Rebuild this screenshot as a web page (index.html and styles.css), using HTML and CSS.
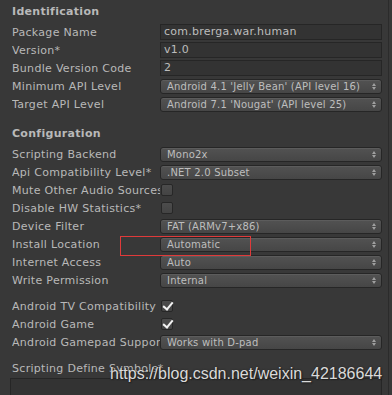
FILE: index.html
```html
<!DOCTYPE html>
<html lang="en">
<head>
  <meta charset="UTF-8" />
  <title>Player Settings</title>
  <link rel="stylesheet" href="styles.css">
</head>
<body>
  <div class="inspector">
    <div class="section-title">Identification</div>
    <div class="row"><span class="label">Package Name</span><div class="field">com.brerga.war.human</div></div>
    <div class="row"><span class="label">Version*</span><div class="field">v1.0</div></div>
    <div class="row"><span class="label">Bundle Version Code</span><div class="field">2</div></div>
    <div class="row"><span class="label">Minimum API Level</span><div class="popup">Android 4.1 'Jelly Bean' (API level 16)<span class="arrows"></span></div></div>
    <div class="row"><span class="label">Target API Level</span><div class="popup">Android 7.1 'Nougat' (API level 25)<span class="arrows"></span></div></div>

    <div class="section-title config">Configuration</div>
    <div class="row"><span class="label">Scripting Backend</span><div class="popup">Mono2x<span class="arrows"></span></div></div>
    <div class="row"><span class="label">Api Compatibility Level*</span><div class="popup">.NET 2.0 Subset<span class="arrows"></span></div></div>
    <div class="row"><span class="label">Mute Other Audio Sources</span><div class="check"></div></div>
    <div class="row"><span class="label">Disable HW Statistics*</span><div class="check"></div></div>
    <div class="row"><span class="label">Device Filter</span><div class="popup">FAT (ARMv7+x86)<span class="arrows"></span></div></div>
    <div class="row"><span class="label">Install Location</span><div class="popup">Automatic<span class="arrows"></span></div></div>
    <div class="row"><span class="label">Internet Access</span><div class="popup">Auto<span class="arrows"></span></div></div>
    <div class="row"><span class="label">Write Permission</span><div class="popup">Internal<span class="arrows"></span></div></div>

    <div class="group">
      <div class="row"><span class="label">Android TV Compatibility</span><div class="check on"></div></div>
      <div class="row"><span class="label">Android Game</span><div class="check on"></div></div>
      <div class="row"><span class="label">Android Gamepad Support Level</span><div class="popup">Works with D-pad<span class="arrows"></span></div></div>
    </div>

    <div class="row symbols-label"><span class="label wide">Scripting Define Symbols*</span></div>
    <div class="field symbols"></div>
  </div>

  <div class="highlight"></div>
  <div class="watermark">https://blog.csdn.net/weixin_42186644</div>
</body>
</html>
```

FILE: styles.css
```css
html, body { margin: 0; height: 100%; overflow: hidden; }
body { background: #383838; font-family: "DejaVu Sans", sans-serif; font-size: 11px; color: #b9b9b9; position: relative; }

.inspector { padding: 3px 6px 0 12px; border-right: 1px solid #2b2b2b; margin-right: 3px; height: 100%; box-sizing: border-box; }
.section-title { height: 18px; line-height: 18px; font-weight: bold; letter-spacing: 0.3px; margin-bottom: 2px; }
.section-title.config { margin-top: 12px; }

.row { display: flex; align-items: center; height: 18px; }
.label { width: 148px; flex: none; white-space: nowrap; overflow: hidden; letter-spacing: 0.3px; }
.label.wide { width: auto; }

.field { flex: 1; height: 16px; box-sizing: border-box; background: #333; border: 1px solid #262626; padding-left: 3px; line-height: 14px; color: #bdbdbd; letter-spacing: 0.25px; }

.popup { flex: 1; height: 15px; box-sizing: border-box; position: relative; border: 1px solid #262626; border-radius: 3px; background: linear-gradient(#525252, #464646); box-shadow: inset 0 1px 0 #5c5c5c; padding-left: 6px; line-height: 13px; font-size: 10px; letter-spacing: 0.2px; color: #bebebe; white-space: nowrap; }
.arrows { position: absolute; right: 4px; top: 3px; width: 5px; height: 7px; }
.arrows::before, .arrows::after { content: ""; position: absolute; left: 0; border-left: 2.5px solid transparent; border-right: 2.5px solid transparent; }
.arrows::before { top: 0; border-bottom: 3px solid #a0a0a0; }
.arrows::after { bottom: 0; border-top: 3px solid #a0a0a0; }

.check { width: 12px; height: 12px; box-sizing: border-box; margin-left: 1px; border: 1px solid #272727; border-radius: 2px; background: linear-gradient(#4c4c4c, #444); position: relative; }
.check.on::after { content: ""; position: absolute; left: 3px; top: -1px; width: 4px; height: 8px; border-right: 2px solid #f2f2f2; border-bottom: 2px solid #f2f2f2; transform: rotate(40deg); }

.group { margin-top: 8px; }
.symbols-label { margin-top: 8px; }
.symbols { margin: 1px 0 0 -2px; height: 20px; }

.highlight { position: absolute; left: 120px; top: 236px; width: 129px; height: 18px; border: 1px solid #e03a3a; }
.watermark { position: absolute; left: 110px; top: 365px; font-family: "Liberation Sans", Arial, sans-serif; font-size: 16px; line-height: 18px; color: #dadada; text-shadow: 0 0 2px #222, 1px 1px 1px #222; }
```
